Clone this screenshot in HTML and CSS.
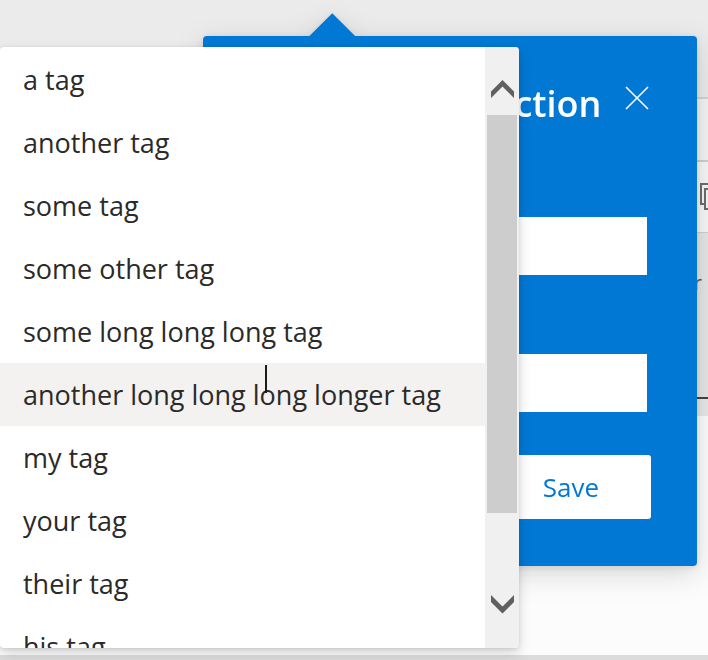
FILE: index.html
```html
<!DOCTYPE html>
<html lang="en">
<head>
<meta charset="utf-8">
<title>Collection tags</title>
<link rel="stylesheet" href="styles.css">
</head>
<body>
<div class="page">
  <header class="topbar"></header>
  <div class="band band-toolbar"></div>
  <div class="band band-row">
    <svg class="copy-icon" width="26" height="28" viewBox="0 0 26 28" aria-hidden="true">
      <rect x="1" y="1" width="18" height="20" fill="none" stroke="#6e6e6e" stroke-width="2"/>
      <rect x="5" y="6" width="18" height="20" fill="#f7f7f7" stroke="#6e6e6e" stroke-width="2"/>
    </svg>
  </div>
  <div class="band band-section"><span class="band-text">Owner</span></div>
  <div class="band band-sub"></div>
  <div class="band band-main"></div>
  <footer class="bottom"></footer>

  <section class="callout" aria-label="Create tag collection">
    <div class="callout-header">
      <h2 class="callout-title">Create tag collection</h2>
      <button class="close-btn" aria-label="Close">
        <svg width="24" height="24" viewBox="0 0 24 24" aria-hidden="true">
          <path d="M1 1 L23 23 M23 1 L1 23" stroke="#ffffff" stroke-width="1.6" fill="none"/>
        </svg>
      </button>
    </div>
    <div class="field">
      <label class="field-label">Name</label>
      <input class="field-input" type="text">
    </div>
    <div class="field">
      <label class="field-label">Tags</label>
      <input class="field-input" type="text">
    </div>
    <div class="callout-actions">
      <button class="save-btn">Save</button>
    </div>
  </section>

  <div class="dropdown" role="listbox">
    <ul class="options">
      <li class="option">a tag</li>
      <li class="option">another tag</li>
      <li class="option">some tag</li>
      <li class="option">some other tag</li>
      <li class="option">some long long long tag</li>
      <li class="option is-hover">another long long long longer tag</li>
      <li class="option">my tag</li>
      <li class="option">your tag</li>
      <li class="option">their tag</li>
      <li class="option">his tag</li>
    </ul>
    <div class="scrollbar">
      <div class="sb-btn sb-up">
        <svg width="23" height="18" viewBox="0 0 23 18" aria-hidden="true">
          <polygon points="11.5,0 23,11.5 23,18 11.5,6.5 0,18 0,11.5" fill="#606060"/>
        </svg>
      </div>
      <div class="sb-thumb"></div>
      <div class="sb-track"></div>
      <div class="sb-btn sb-down">
        <svg width="23" height="19" viewBox="0 0 23 19" aria-hidden="true">
          <polygon points="0,0 11.5,11.5 23,0 23,7 11.5,18.5 0,7" fill="#606060"/>
        </svg>
      </div>
    </div>
  </div>
  <div class="text-cursor"></div>
</div>
</body>
</html>
```

FILE: styles.css
```css
* { box-sizing: border-box; }
html, body { margin: 0; padding: 0; }
body {
  font-family: "Open Sans", "Noto Sans", sans-serif;
  background: #ffffff;
}
.page {
  position: relative;
  width: 708px;
  height: 660px;
  overflow: hidden;
  background: #ffffff;
  display: flex;
  flex-direction: column;
}
.topbar {
  height: 99px;
  flex: none;
  background: #ebebeb;
  border-bottom: 2px solid #d4d4d4;
}
.band { flex: none; }
.band-toolbar {
  height: 63px;
  background: #f4f4f4;
  border-bottom: 2px solid #cfcfcf;
}
.band-row {
  height: 71px;
  background: #f7f7f7;
  border-bottom: 1px solid #d0d0d0;
  display: flex;
  justify-content: flex-end;
  align-items: center;
}
.copy-icon { margin-right: -18px; }
.band-section {
  height: 166px;
  background: #e6e6e6;
  border-bottom: 2px solid #444444;
  display: flex;
  justify-content: flex-end;
  padding: 38px 6px 0 0;
}
.band-text {
  font-size: 20px;
  color: #555;
  line-height: 24px;
}
.band-sub {
  height: 17px;
  background: #e8e8e8;
}
.band-main {
  flex: 1;
  background: #fcfcfc;
}
.bottom {
  height: 5px;
  flex: none;
  background: #dcdcdc;
}

/* Callout */
.callout {
  position: absolute;
  left: 203px;
  top: 36px;
  width: 494px;
  padding: 44px 46px 47px 48px;
  background: #0078d4;
  border-radius: 4px;
  filter: drop-shadow(0 8px 14px rgba(0,0,0,0.14)) drop-shadow(0 1px 3px rgba(0,0,0,0.1));
  display: flex;
  flex-direction: column;
}
.callout::before {
  content: "";
  position: absolute;
  left: 112.75px;
  top: -16.25px;
  width: 32.5px;
  height: 32.5px;
  background: #0078d4;
  transform: rotate(45deg);
}
.callout-header {
  display: flex;
  align-items: flex-start;
  justify-content: space-between;
  height: 48px;
  margin-bottom: 12px;
}
.callout-title {
  margin: 0 0 0 -6px;
  font-size: 36px;
  font-weight: 600;
  line-height: 48px;
  color: #ffffff;
  white-space: nowrap;
}
.close-btn {
  width: 28px;
  height: 28px;
  margin-top: 4px;
  padding: 2px;
  border: none;
  background: transparent;
  display: flex;
}
.field {
  display: flex;
  flex-direction: column;
  padding-top: 31px;
  gap: 8px;
}
.field-label {
  font-size: 24px;
  line-height: 36px;
  color: #ffffff;
}
.field-input {
  height: 62px;
  margin-right: 2px;
  border: 2px solid #0078d4;
  border-radius: 2px;
  background: #ffffff;
  font: inherit;
}
.callout-actions {
  display: flex;
  justify-content: flex-end;
  margin-top: 41px;
}
.save-btn {
  width: 160px;
  height: 64px;
  border: none;
  border-radius: 3px;
  background: #ffffff;
  color: #0078d4;
  font-family: "Open Sans", "Noto Sans", sans-serif;
  font-size: 26px;
  padding: 0;
}

/* Dropdown */
.dropdown {
  position: absolute;
  left: 0;
  top: 47px;
  width: 519px;
  height: 601px;
  background: #ffffff;
  border-radius: 4px;
  box-shadow: 0 6px 14px rgba(0,0,0,0.14), 0 1px 4px rgba(0,0,0,0.12);
  display: flex;
  overflow: hidden;
}
.options {
  flex: 1;
  margin: 0;
  padding: 1px 0 0;
  list-style: none;
  overflow: hidden;
}
.option {
  height: 63px;
  line-height: 63px;
  padding-left: 23px;
  font-size: 27px;
  color: #2b2a29;
  white-space: nowrap;
}
.option.is-hover { background: #f3f2f1; }
.scrollbar {
  width: 34px;
  flex: none;
  background: #f0f0f0;
  display: flex;
  flex-direction: column;
}
.sb-btn {
  display: flex;
  justify-content: center;
  flex: none;
}
.sb-up { height: 68px; padding-top: 33px; }
.sb-thumb {
  height: 398px;
  flex: none;
  margin: 0 2px;
  background: #cdcdcd;
}
.sb-track { flex: 1; }
.sb-down { padding: 16px 0 34px; }
.text-cursor {
  position: absolute;
  left: 265px;
  top: 365px;
  width: 2px;
  height: 28px;
  background: #1b1b1b;
}
```
